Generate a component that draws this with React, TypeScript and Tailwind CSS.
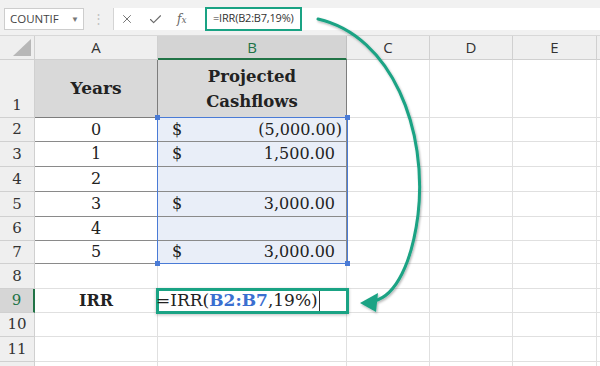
import React from 'react';
import { X, Check } from 'lucide-react';

const teal = '#1aa384';

type RowProps = {
  num: string;
  h: string;
  children: React.ReactNode;
  active?: boolean;
  bottom?: boolean;
};

// row header + cells
function Row({ num, h, children, active, bottom }: RowProps) {
  return (
    <div className={`flex ${h}`}>
      <div
        className={
          active
            ? 'w-[35px] shrink-0 flex items-center justify-center bg-[#d6d6d6] border-b border-[#d0d0d0] border-r-2 border-r-[#217346] text-[#217346] text-[15px]'
            : bottom
            ? 'w-[35px] shrink-0 flex items-end justify-center pb-[1px] bg-[#efefef] border-b border-r border-[#d0d0d0] text-[#333] text-[15px]'
            : 'w-[35px] shrink-0 flex items-center justify-center bg-[#efefef] border-b border-r border-[#d0d0d0] text-[#333] text-[15px]'
        }
      >
        {num}
      </div>
      {children}
      <div className="w-[83px] shrink-0 border-r border-b border-[#e0e0e0]" />
      <div className="w-[83px] shrink-0 border-r border-b border-[#e0e0e0]" />
      <div className="w-[84px] shrink-0 border-r border-b border-[#e0e0e0]" />
      <div className="flex-1 border-b border-[#e0e0e0]" />
    </div>
  );
}

const data = [
  { n: '2', h: 'h-[24px]', y: '0', v: '(5,000.00)', neg: true },
  { n: '3', h: 'h-[25px]', y: '1', v: '1,500.00' },
  { n: '4', h: 'h-[25px]', y: '2', v: '' },
  { n: '5', h: 'h-[25px]', y: '3', v: '3,000.00' },
  { n: '6', h: 'h-[24px]', y: '4', v: '' },
  { n: '7', h: 'h-[23px]', y: '5', v: '3,000.00' },
];

function Handle({ cls }: { cls: string }) {
  return <div className={`absolute w-[5px] h-[5px] bg-[#4a7bd6] ${cls}`} />;
}

export default function App() {
  return (
    <div className="relative w-[600px] h-[366px] overflow-hidden bg-white font-['Open_Sans','Noto_Sans',sans-serif]">
      {/* formula toolbar */}
      <div className="h-[36px] bg-[#f1f1f1] flex items-start pt-[8px] border-b border-[#d8d8d8]">
        <div className="ml-[4px] w-[80px] h-[22px] bg-white border border-[#cdcdcd] flex items-center justify-between pl-[5px] pr-[4px] text-[11.5px] text-[#444]">
          <span>COUNTIF</span>
          <span className="text-[8px] text-[#777]">▼</span>
        </div>
        <div className="w-[29px] h-[22px] flex items-center justify-center text-[13px] text-[#c2c2c2]">⋮</div>
        <div className="flex-1 h-[22px] bg-white border-l border-[#d4d4d4] flex items-center">
          <div className="w-[91px] flex items-center shrink-0">
            <X size={14} strokeWidth={1.6} className="ml-[6px] text-[#6a6a6a]" />
            <Check size={15} strokeWidth={1.8} className="ml-[14px] text-[#6a6a6a]" />
            <span className="ml-[14px] italic text-[12px] text-[#666] font-['DejaVu_Serif',serif]">
              f<span className="text-[9px]">x</span>
            </span>
          </div>
          <div className="h-[24px] w-[97px] -mt-[1px] border-[2.5px] border-[#1aa384] flex items-center pl-[6px] text-[11px] tracking-[-0.2px] text-[#333] whitespace-nowrap">
            =IRR(B2:B7,19%)
          </div>
        </div>
      </div>

      {/* column headers */}
      <div className="flex h-[24px] bg-[#efefef] text-[15px] text-[#333]">
        <div className="w-[35px] shrink-0 border-r border-b border-[#d0d0d0] flex items-end justify-end pr-[3px] pb-[3px]">
          <svg width="18" height="17" viewBox="0 0 18 17">
            <polygon points="18,0 18,17 0,17" fill="#b7b7b7" />
          </svg>
        </div>
        <div className="w-[123px] shrink-0 border-r border-b border-[#d0d0d0] flex items-center justify-center">A</div>
        <div className="w-[189px] shrink-0 bg-[#d4d4d4] border-r border-[#c0c0c0] border-b-2 border-b-[#217346] flex items-center justify-center text-[#217346]">
          B
        </div>
        <div className="w-[83px] shrink-0 border-r border-b border-[#d0d0d0] flex items-center justify-center">C</div>
        <div className="w-[83px] shrink-0 border-r border-b border-[#d0d0d0] flex items-center justify-center">D</div>
        <div className="w-[84px] shrink-0 border-r border-b border-[#d0d0d0] flex items-center justify-center">E</div>
        <div className="flex-1 border-b border-[#d0d0d0]" />
      </div>

      {/* sheet body */}
      <div className="font-['DejaVu_Serif','Liberation_Serif',serif] text-[16px] text-[#222]">
        <Row num="1" h="h-[58px]" bottom>
          <div className="w-[123px] shrink-0 bg-[#d9d9d9] border-r border-b border-[#7d7d7d] flex items-center justify-center font-bold text-[17px]">
            Years
          </div>
          <div className="w-[189px] shrink-0 bg-[#d9d9d9] border-r border-b border-[#7d7d7d] flex flex-col items-center justify-center font-bold text-[16.5px] leading-[25px]">
            <span>Projected</span>
            <span>Cashflows</span>
          </div>
        </Row>
        {data.map((r) => (
          <Row key={r.n} num={r.n} h={r.h}>
            <div className="w-[123px] shrink-0 border-r border-b border-[#8a8a8a] flex items-center justify-center">
              {r.y}
            </div>
            <div className="w-[189px] shrink-0 bg-[#e9eef8] border-r border-b border-[#8a8a8a] flex items-center justify-between pl-[14px]">
              <span>{r.v ? '$' : ''}</span>
              <span className={r.neg ? 'pr-[4px]' : 'pr-[11px]'}>{r.v}</span>
            </div>
          </Row>
        ))}
        <Row num="8" h="h-[25px]">
          <div className="w-[123px] shrink-0 border-r border-b border-[#e0e0e0]" />
          <div className="w-[189px] shrink-0 border-r border-b border-[#e0e0e0]" />
        </Row>
        <Row num="9" h="h-[24px]" active>
          <div className="w-[123px] shrink-0 border-r border-b border-[#e0e0e0] flex items-center justify-center font-bold">
            IRR
          </div>
          <div className="w-[189px] shrink-0 border-r border-b border-[#e0e0e0] relative">
            <div className="absolute -left-[2px] -top-[1px] w-[193px] h-[26px] border-[3px] border-[#1aa384] bg-white flex items-center text-[17px] shadow-[0_1px_3px_rgba(0,0,0,0.25)]">
              <span className="-ml-[3px]">=IRR(</span>
              <span className="font-bold text-[#3b6fd0]">B2:B7</span>
              <span>,19%)</span>
              <span className="ml-[1px] w-px h-[20px] bg-[#333]" />
            </div>
          </div>
        </Row>
        <Row num="10" h="h-[24px]">
          <div className="w-[123px] shrink-0 border-r border-b border-[#e0e0e0]" />
          <div className="w-[189px] shrink-0 border-r border-b border-[#e0e0e0]" />
        </Row>
        <Row num="11" h="h-[25px]">
          <div className="w-[123px] shrink-0 border-r border-b border-[#e0e0e0]" />
          <div className="w-[189px] shrink-0 border-r border-b border-[#e0e0e0]" />
        </Row>
        <Row num="" h="h-[24px]">
          <div className="w-[123px] shrink-0 border-r border-b border-[#e0e0e0]" />
          <div className="w-[189px] shrink-0 border-r border-b border-[#e0e0e0]" />
        </Row>
      </div>

      {/* selection B2:B7 */}
      <div className="absolute left-[157px] top-[117px] w-[191px] h-[147px] border border-[#4a7bd6] pointer-events-none">
        <Handle cls="-left-[3px] -top-[3px]" />
        <Handle cls="-right-[3px] -top-[3px]" />
        <Handle cls="-left-[3px] -bottom-[3px]" />
        <Handle cls="-right-[3px] -bottom-[3px]" />
      </div>

      {/* curved arrow */}
      <svg className="absolute inset-0 pointer-events-none" width="600" height="366" viewBox="0 0 600 366">
        <defs>
          <filter id="sh" x="-20%" y="-20%" width="140%" height="140%">
            <feDropShadow dx="1" dy="1.5" stdDeviation="1.2" floodColor="#000" floodOpacity="0.3" />
          </filter>
        </defs>
        <g filter="url(#sh)">
          <path
            d="M318 19 C 392 36, 428 130, 418 215 C 412 262, 396 296, 374 301"
            fill="none"
            stroke={teal}
            strokeWidth="3"
            strokeLinecap="round"
          />
          <polygon points="360,303 378,293 376,312" fill={teal} />
        </g>
      </svg>
    </div>
  );
}
